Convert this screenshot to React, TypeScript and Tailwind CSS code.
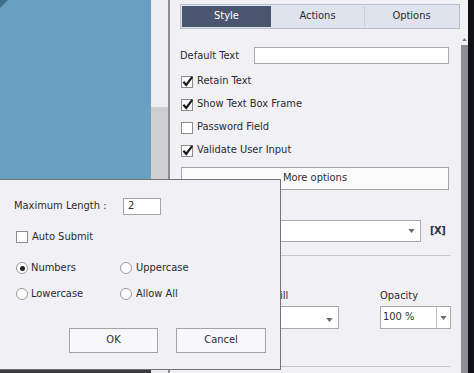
import React from 'react';

const FONT = "font-['DejaVu_Sans_Condensed','DejaVu_Sans',sans-serif]";

function CheckBox({ checked }: { checked?: boolean }) {
  return (
    <span className="relative w-[12px] h-[12px] shrink-0 border border-[#8c8c8c] bg-white">
      {checked && (
        <svg viewBox="0 0 12 12" className="absolute left-[-1px] top-[-2px] w-[13px] h-[13px]">
          <path d="M2.2 6.2 L4.8 9.2 L10.4 1.8" fill="none" stroke="#1a1a1a" strokeWidth="2" />
        </svg>
      )}
    </span>
  );
}

function Radio({ checked }: { checked?: boolean }) {
  return (
    <span className="w-[12px] h-[12px] shrink-0 rounded-full border border-[#9a9a9a] bg-white flex items-center justify-center">
      {checked && <span className="w-[5px] h-[5px] rounded-full bg-[#222]" />}
    </span>
  );
}

function CheckRow({ label, checked }: { label: string; checked?: boolean }) {
  return (
    <div className="h-[23px] flex items-center gap-[4px] pl-[1px]">
      <CheckBox checked={checked} />
      <span>{label}</span>
    </div>
  );
}

function Arrow() {
  return (
    <svg viewBox="0 0 8 5" className="w-[7px] h-[4px]">
      <path d="M0 0 H8 L4 5 Z" fill="#6a6a6a" />
    </svg>
  );
}

function PropertiesPanel() {
  return (
    <div className="w-[291px] h-full flex flex-col pl-[10px] bg-[#f0f0f5]">
      {/* tabs */}
      <div className="mt-[4px] h-[25px] w-[280px] flex border border-[#b9bfcc] bg-[#dfe3ee] p-[1px]">
        <div className="w-[89px] flex items-center justify-center bg-[#4a5570] text-white">Style</div>
        <div className="w-[94px] flex items-center justify-center border-r border-[#c8cdd8]">Actions</div>
        <div className="flex-1 flex items-center justify-center">Options</div>
      </div>

      <div className="mt-[18px] h-[17px] flex items-center">
        <span className="w-[74px] pt-[1px]">Default Text</span>
        <div className="w-[195px] h-[17px] border border-[#a9a9a9] bg-white" />
      </div>

      <div className="mt-[6px] flex flex-col">
        <CheckRow label="Retain Text" checked />
        <CheckRow label="Show Text Box Frame" checked />
        <CheckRow label="Password Field" />
        <CheckRow label="Validate User Input" checked />
      </div>

      <div className="mt-[5px] ml-[1px] w-[268px] h-[23px] border border-[#a6a6a6] bg-[#fbfbfc] flex items-center justify-center">
        More options
      </div>

      <div className="mt-[30px] h-[22px] flex items-center">
        <div className="w-[241px] h-[22px] border border-[#a9a9a9] bg-white flex items-center justify-end pr-[5px]">
          <Arrow />
        </div>
        <span className="ml-[9px] text-[#333] font-bold tracking-[-0.5px]">[X]</span>
      </div>

      <div className="mt-[13px] w-[270px] h-px bg-[#c4c6cc]" />

      <div className="mt-[32px] flex">
        <div className="ml-[95px] w-[64px] flex flex-col">
          <span className="h-[16px] leading-[16px]">Fill</span>
          <div className="mt-[2px] h-[23px] border border-[#a9a9a9] bg-white flex items-end justify-end pr-[5px] pb-[6px]">
            <Arrow />
          </div>
        </div>
        <div className="ml-[41px] w-[71px] flex flex-col">
          <span className="h-[16px] leading-[16px]">Opacity</span>
          <div className="mt-[2px] h-[23px] border border-[#a9a9a9] bg-white flex">
            <span className="flex-1 flex items-center pl-[2px]">100 %</span>
            <span className="w-[14px] border-l border-[#c2c2c2] flex items-center justify-center">
              <Arrow />
            </span>
          </div>
        </div>
      </div>

      <div className="mt-[37px] w-[270px] h-px bg-[#c4c6cc]" />
    </div>
  );
}

function LengthDialog() {
  return (
    <div className="absolute left-0 top-[179px] w-[281px] h-[191px] border-t border-r border-b border-[#747474] bg-[#f0f0f5] flex flex-col pl-[14px] pt-[18px]">
      <div className="h-[17px] flex items-center">
        <span className="w-[109px]">Maximum Length :</span>
        <div className="w-[38px] h-[17px] border border-[#a4a4a4] bg-white flex items-center pl-[4px]">2</div>
      </div>

      <div className="mt-[15px] ml-[2px] h-[14px] flex items-center gap-[4px]">
        <CheckBox />
        <span>Auto Submit</span>
      </div>

      <div className="mt-[16px] ml-[2px] h-[14px] grid grid-cols-[104px_1fr]">
        <div className="flex items-center gap-[3px]"><Radio checked /><span>Numbers</span></div>
        <div className="flex items-center gap-[4px]"><Radio /><span>Uppercase</span></div>
      </div>
      <div className="mt-[12px] ml-[2px] h-[14px] grid grid-cols-[104px_1fr]">
        <div className="flex items-center gap-[3px]"><Radio /><span>Lowercase</span></div>
        <div className="flex items-center gap-[4px]"><Radio /><span>Allow All</span></div>
      </div>

      <div className="mt-[28px] ml-[55px] flex gap-[18px]">
        <div className="w-[89px] h-[25px] border border-[#a3a3a3] bg-[#f8f8fa] flex items-center justify-center">OK</div>
        <div className="w-[90px] h-[25px] border border-[#a3a3a3] bg-[#f8f8fa] flex items-center justify-center">Cancel</div>
      </div>
    </div>
  );
}

export default function App() {
  return (
    <div className={`relative w-[474px] h-[373px] overflow-hidden flex bg-[#f0f0f4] text-[11px] text-[#2c2c2c] ${FONT}`}>
      {/* canvas area */}
      <div className="w-[151px] flex flex-col">
        <div className="relative h-[180px] bg-[#69a0bf]">
          <svg viewBox="0 0 8 8" className="absolute left-0 top-0 w-[8px] h-[8px]">
            <path d="M0 0 H8 L0 8 Z" fill="#3e7089" />
          </svg>
        </div>
        <div className="flex-1" />
        <div className="h-[3px] bg-[#3a3a3c]" />
      </div>
      {/* canvas scrollbar */}
      <div className="w-[17px] flex flex-col bg-[#eeeef1]">
        <div className="h-[107px]" />
        <div className="h-[73px] bg-[#cfcfd0]" />
      </div>
      <div className="w-[2px] bg-[#8e8e92]" />

      <PropertiesPanel />

      {/* panel scrollbar */}
      <div className="w-[7px] flex flex-col bg-[#f0f0f5]">
        <div className="h-[33px]" />
        <div className="h-[12px] flex items-center justify-center">
          <svg viewBox="0 0 6 4" className="w-[5px] h-[3px]">
            <path d="M0 4 H6 L3 0 Z" fill="#7a7a7a" />
          </svg>
        </div>
        <div className="flex-1 bg-[#8d8e96]" />
      </div>
      <div className="flex-1 bg-[#111113]" />

      <LengthDialog />
    </div>
  );
}
